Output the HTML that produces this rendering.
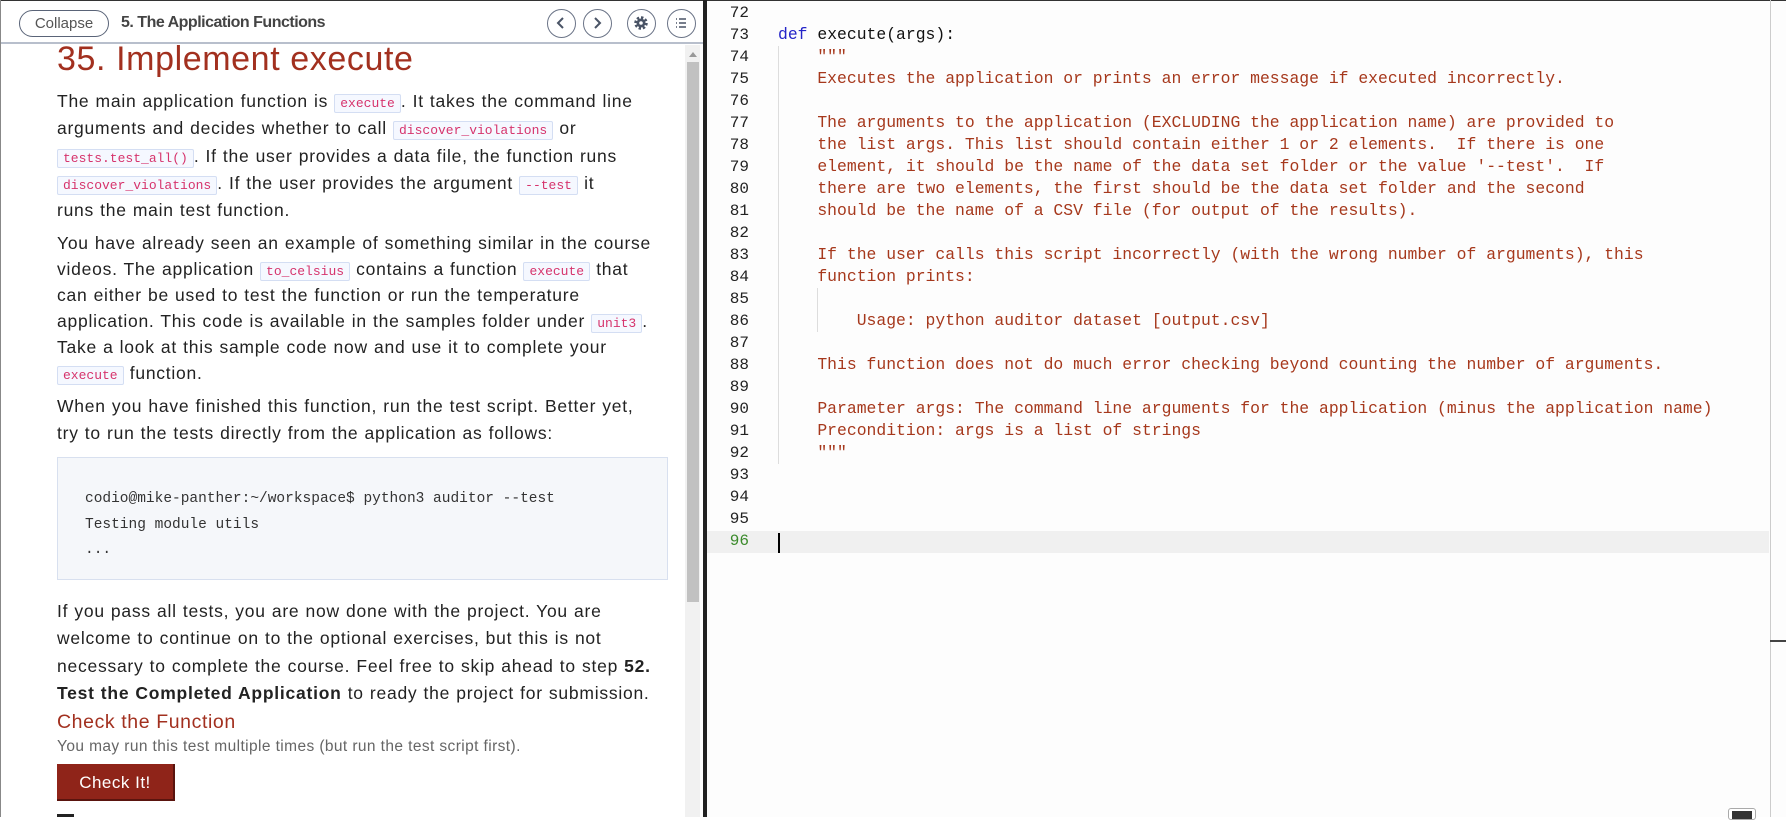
<!DOCTYPE html>
<html><head><meta charset="utf-8"><style>
*{margin:0;padding:0;box-sizing:border-box}
body{width:1786px;height:817px;overflow:hidden;background:#fff;position:relative;font-family:"Liberation Sans",sans-serif}
#left{position:absolute;left:0;top:0;width:703px;height:817px;border-left:1px solid #888;background:#fff;overflow:hidden}
#hdr{position:absolute;left:0;top:0;width:702px;height:44px;border-bottom:2px solid #b8bfcc;border-top:1px solid #333}
.coll{position:absolute;left:18px;top:9px;width:90px;height:27px;border:1px solid #5a6478;border-radius:14px;font-size:15px;color:#555;text-align:center;line-height:25px}
.ttl{position:absolute;left:120px;top:13px;font-size:16px;font-weight:bold;color:#444;letter-spacing:-0.5px}
.ic{position:absolute;top:8px;width:29px;height:29px;border:1.5px solid #6b7487;border-radius:50%}
#scroll{position:absolute;left:684px;top:45px;width:15px;height:772px;background:#f1f1f1}
#thumb{position:absolute;left:686px;top:62px;width:12px;height:540px;background:#c1c1c1}
.c{position:absolute;left:56px;font-size:17.5px;color:#222;line-height:27.3px;letter-spacing:0.75px;white-space:nowrap;word-spacing:0.5px}
h1{position:absolute;left:56px;top:40px;font-weight:normal;font-size:34px;color:#a2301f;letter-spacing:0.6px}
code{font-family:"Liberation Mono",monospace;font-size:13px;line-height:1;color:#d6336c;background:#f5f8ff;border:1px solid #d4def3;padding:1px 5px;border-radius:2px;letter-spacing:0;word-spacing:0}
pre{position:absolute;left:56px;top:457px;width:611px;height:123px;background:#f5f7fa;border:1px solid #d8e0ef;font-family:"Liberation Mono",monospace;font-size:14.5px;color:#333;padding:29px 27px;line-height:25.5px}
.btn{position:absolute;left:56px;top:764px;width:118px;height:37px;background:#8f2419;color:#fff;font-size:17px;text-align:center;line-height:37px;border-bottom:2px solid #5a140e;border-right:2px solid #5a140e;letter-spacing:0.5px}
#sep{position:absolute;left:703px;top:0;width:4px;height:817px;background:#222}
#ed{position:absolute;left:707px;top:0;width:1079px;height:817px;background:#fdfdfd;font-family:"Liberation Mono",monospace;font-size:16.4px}
#ed .ln{position:absolute;left:0;width:42px;text-align:right;color:#222;height:22px;line-height:22px;font-size:16px}
#ed .tx{position:absolute;left:71px;white-space:pre;height:22px;line-height:22px;color:#a6381c}
</style></head><body>
<div id="left">
<div id="hdr">
<div class="coll">Collapse</div>
<div class="ttl">5. The Application Functions</div>
<div class="ic" style="left:546px"><svg width="26" height="26" viewBox="0 0 26 26"><path d="M15 8l-5 5 5 5" stroke="#4a5466" stroke-width="2" fill="none"/></svg></div>
<div class="ic" style="left:582px"><svg width="26" height="26" viewBox="0 0 26 26"><path d="M11 8l5 5-5 5" stroke="#4a5466" stroke-width="2" fill="none"/></svg></div>
<div class="ic" style="left:626px"><svg width="26" height="26" viewBox="0 0 26 26"><circle cx="13" cy="13" r="5" fill="none" stroke="#4a5466" stroke-width="3.5" stroke-dasharray="2.2 1.7"/><circle cx="13" cy="13" r="4.5" fill="#4a5466"/><circle cx="13" cy="13" r="1.8" fill="#fff"/></svg></div>
<div class="ic" style="left:666px"><svg width="26" height="26" viewBox="0 0 26 26"><path d="M8 9h1M11 9h7M8 13h1M11 13h7M8 17h1M11 17h7" stroke="#4a5466" stroke-width="1.5"/></svg></div>
</div>
<div id="scroll"></div><div id="thumb"></div>
<div style="position:absolute;left:688px;top:52px;width:0;height:0;border-left:4px solid transparent;border-right:4px solid transparent;border-bottom:5px solid #999"></div>
<h1>35. Implement execute</h1>
<div class="c" style="top:88px">The main application function is <code>execute</code>. It takes the command line<br>arguments and decides whether to call <code>discover_violations</code> or<br><code>tests.test_all()</code>. If the user provides a data file, the function runs<br><code>discover_violations</code>. If the user provides the argument <code>--test</code> it<br>runs the main test function.</div>
<div class="c" style="top:230px;line-height:26px">You have already seen an example of something similar in the course<br>videos. The application <code>to_celsius</code> contains a function <code>execute</code> that<br>can either be used to test the function or run the temperature<br>application. This code is available in the samples folder under <code>unit3</code>.<br>Take a look at this sample code now and use it to complete your<br><code>execute</code> function.</div>
<div class="c" style="top:393px">When you have finished this function, run the test script. Better yet,<br>try to run the tests directly from the application as follows:</div>
<pre>codio@mike-panther:~/workspace$ python3 auditor --test
Testing module utils
...</pre>
<div class="c" style="top:598px">If you pass all tests, you are now done with the project. You are<br>welcome to continue on to the optional exercises, but this is not<br>necessary to complete the course. Feel free to skip ahead to step <b>52.</b><br><b>Test the Completed Application</b> to ready the project for submission.</div>
<div style="position:absolute;left:56px;top:711px;font-size:19.5px;color:#a2301f;letter-spacing:0.6px">Check the Function</div>
<div style="position:absolute;left:56px;top:738px;font-size:15.5px;color:#666;letter-spacing:0.4px">You may run this test multiple times (but run the test script first).</div>
<div class="btn">Check It!</div>
<div style="position:absolute;left:56px;top:814px;width:17px;height:3px;background:#222"></div>
</div>
<div id="sep"></div>
<div id="ed">
<div style="position:absolute;left:0;top:0;width:1079px;height:1px;background:#333"></div>
<div style="position:absolute;left:0;top:531px;width:1062px;height:22px;background:#f0f0f0"></div>
<div style="position:absolute;left:71px;top:46px;width:1px;height:418px;background:#ddd"></div>
<div style="position:absolute;left:110px;top:288px;width:1px;height:44px;background:#ddd"></div>
<div style="position:absolute;left:71px;top:533px;width:2px;height:20px;background:#000"></div>
<div style="position:absolute;left:1063px;top:0;width:1px;height:817px;background:#ccc"></div>
<div style="position:absolute;left:1063px;top:640px;width:16px;height:2px;background:#444"></div>
<div style="position:absolute;left:1021px;top:808px;width:28px;height:12px;border:1px solid #aaa;border-radius:3px;background:#fff"><div style="margin:2px 3px;height:8px;background:#333"></div></div>
<div style="position:absolute;left:0;top:2px;width:1079px;height:600px">
<div class="ln" style="top:0">72</div>
<div class="ln" style="top:22px">73</div><div class="tx" style="top:22px"><span style="color:#2424c8">def</span><span style="color:#111"> execute(args):</span></div>
<div class="ln" style="top:44px">74</div><div class="tx" style="top:44px">    """</div>
<div class="ln" style="top:66px">75</div><div class="tx" style="top:66px">    Executes the application or prints an error message if executed incorrectly.</div>
<div class="ln" style="top:88px">76</div>
<div class="ln" style="top:110px">77</div><div class="tx" style="top:110px">    The arguments to the application (EXCLUDING the application name) are provided to</div>
<div class="ln" style="top:132px">78</div><div class="tx" style="top:132px">    the list args. This list should contain either 1 or 2 elements.  If there is one</div>
<div class="ln" style="top:154px">79</div><div class="tx" style="top:154px">    element, it should be the name of the data set folder or the value '--test'.  If</div>
<div class="ln" style="top:176px">80</div><div class="tx" style="top:176px">    there are two elements, the first should be the data set folder and the second</div>
<div class="ln" style="top:198px">81</div><div class="tx" style="top:198px">    should be the name of a CSV file (for output of the results).</div>
<div class="ln" style="top:220px">82</div>
<div class="ln" style="top:242px">83</div><div class="tx" style="top:242px">    If the user calls this script incorrectly (with the wrong number of arguments), this</div>
<div class="ln" style="top:264px">84</div><div class="tx" style="top:264px">    function prints:</div>
<div class="ln" style="top:286px">85</div>
<div class="ln" style="top:308px">86</div><div class="tx" style="top:308px">        Usage: python auditor dataset [output.csv]</div>
<div class="ln" style="top:330px">87</div>
<div class="ln" style="top:352px">88</div><div class="tx" style="top:352px">    This function does not do much error checking beyond counting the number of arguments.</div>
<div class="ln" style="top:374px">89</div>
<div class="ln" style="top:396px">90</div><div class="tx" style="top:396px">    Parameter args: The command line arguments for the application (minus the application name)</div>
<div class="ln" style="top:418px">91</div><div class="tx" style="top:418px">    Precondition: args is a list of strings</div>
<div class="ln" style="top:440px">92</div><div class="tx" style="top:440px">    """</div>
<div class="ln" style="top:462px">93</div>
<div class="ln" style="top:484px">94</div>
<div class="ln" style="top:506px">95</div>
<div class="ln" style="top:528px;color:#3a8a2a">96</div>
</div>
</div>
</body></html>
